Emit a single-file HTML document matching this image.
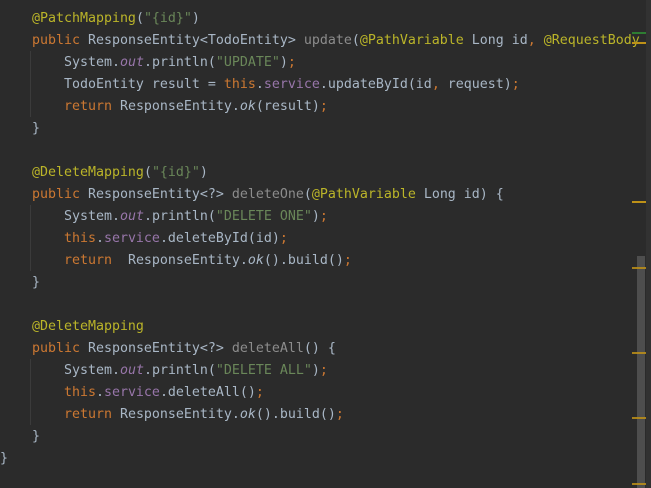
<!DOCTYPE html>
<html><head><style>
html,body{margin:0;padding:0;background:#2b2b2b;width:651px;height:488px;overflow:hidden;position:relative}
pre{margin:0;position:absolute;left:0px;top:8px;font-family:"DejaVu Sans Mono","Liberation Mono",monospace;font-size:13.29px;line-height:22px;color:#a9b7c6}
.k{color:#cc7832}.a{color:#bbb529}.s{color:#6a8759}.f{color:#9876aa;font-style:italic}.fs{color:#9876aa}.g{color:#8c8c8c}.i{font-style:italic}
.m{position:absolute;left:632px;width:14px;height:2px;background:#be9117}
.guide{position:absolute;left:30px;width:1px;background:#3b3b3b}
</style></head><body>
<div class="guide" style="top:51px;height:66px"></div>
<div class="guide" style="top:205px;height:66px"></div>
<div class="guide" style="top:359px;height:66px"></div>
<pre>    <span class="a">@PatchMapping</span>(<span class="s">"{id}"</span>)
    <span class="k">public</span> ResponseEntity&lt;TodoEntity&gt; <span class="g">update</span>(<span class="a">@PathVariable</span> Long id<span class="k">,</span> <span class="a">@RequestBody</span>
        System.<span class="f">out</span>.println(<span class="s">"UPDATE"</span>)<span class="k">;</span>
        TodoEntity result = <span class="k">this</span>.<span class="fs">service</span>.updateById(id<span class="k">,</span> request)<span class="k">;</span>
        <span class="k">return</span> ResponseEntity.<span class="i">ok</span>(result)<span class="k">;</span>
    }

    <span class="a">@DeleteMapping</span>(<span class="s">"{id}"</span>)
    <span class="k">public</span> ResponseEntity&lt;?&gt; <span class="g">deleteOne</span>(<span class="a">@PathVariable</span> Long id) {
        System.<span class="f">out</span>.println(<span class="s">"DELETE ONE"</span>)<span class="k">;</span>
        <span class="k">this</span>.<span class="fs">service</span>.deleteById(id)<span class="k">;</span>
        <span class="k">return</span>  ResponseEntity.<span class="i">ok</span>().build()<span class="k">;</span>
    }

    <span class="a">@DeleteMapping</span>
    <span class="k">public</span> ResponseEntity&lt;?&gt; <span class="g">deleteAll</span>() {
        System.<span class="f">out</span>.println(<span class="s">"DELETE ALL"</span>)<span class="k">;</span>
        <span class="k">this</span>.<span class="fs">service</span>.deleteAll()<span class="k">;</span>
        <span class="k">return</span> ResponseEntity.<span class="i">ok</span>().build()<span class="k">;</span>
    }
}</pre>
<div style="position:absolute;left:646px;top:0;width:5px;height:488px;background:#323232"></div>
<div style="position:absolute;left:637px;top:256px;width:8px;height:232px;background:#4e4e4e"></div>
<div style="position:absolute;left:632px;top:32px;width:14px;height:2px;background:#2e7d32"></div>
<div class="m" style="top:42px"></div>
<div class="m" style="top:201px"></div>
<div class="m" style="top:267px;opacity:.85"></div>
<div class="m" style="top:352px;opacity:.85"></div>
<div class="m" style="top:417px;opacity:.85"></div>
<div class="m" style="top:483px;opacity:.85"></div>
</body></html>
